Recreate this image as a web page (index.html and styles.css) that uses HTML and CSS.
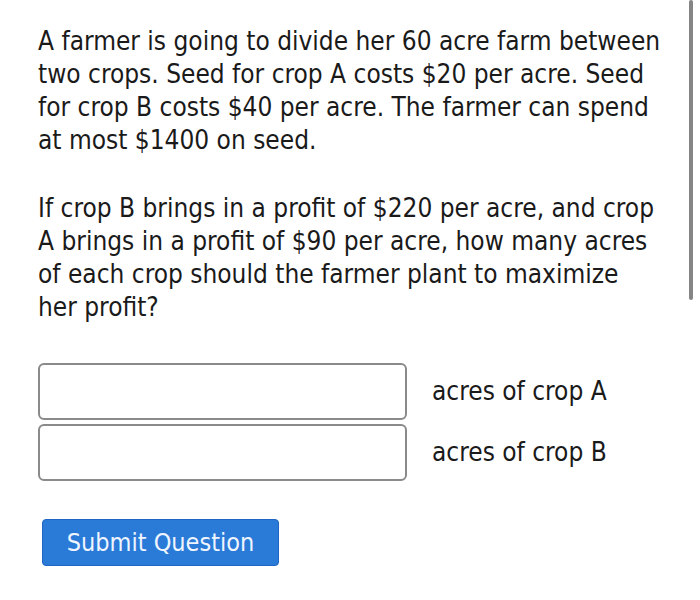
FILE: index.html
```html
<!DOCTYPE html>
<html>
<head>
<meta charset="utf-8">
<link rel="stylesheet" href="styles.css">
</head>
<body>
<div class="page">
  <main class="question">
    <p class="para">A farmer is going to divide her 60 acre farm between<br>two crops. Seed for crop A costs $20 per acre. Seed<br>for crop B costs $40 per acre. The farmer can spend<br>at most $1400 on seed.</p>
    <p class="para">If crop B brings in a profit of $220 per acre, and crop<br>A brings in a profit of $90 per acre, how many acres<br>of each crop should the farmer plant to maximize<br>her profit?</p>
    <div class="answers">
      <div class="answer-row">
        <input class="answer-input" type="text">
        <span class="answer-label">acres of crop A</span>
      </div>
      <div class="answer-row">
        <input class="answer-input" type="text">
        <span class="answer-label">acres of crop B</span>
      </div>
    </div>
    <button class="submit" type="button">Submit Question</button>
  </main>
  <div class="scrollbar"></div>
</div>
</body>
</html>
```

FILE: styles.css
```css
html, body {
  margin: 0;
  padding: 0;
  background: #ffffff;
}

.page {
  position: relative;
  width: 700px;
  height: 600px;
  overflow: hidden;
}

.question {
  padding: 25px 0 0 38px;
  width: 662px;
  font-family: "DejaVu Sans Condensed", "DejaVu Sans", sans-serif;
  font-size: 26px;
  line-height: 33px;
  color: #1a1a1a;
  white-space: nowrap;
}

.para {
  margin: 0 0 35px 0;
}

.answers {
  display: flex;
  flex-direction: column;
  gap: 4px;
  margin-top: 39px;
}

.answer-row {
  display: flex;
  align-items: center;
  gap: 25px;
}

.answer-input {
  box-sizing: border-box;
  width: 369px;
  height: 57px;
  margin: 0;
  border: 2px solid #8a8a8a;
  border-radius: 6px;
  background: #ffffff;
  outline: none;
}

.answer-label {
  font-size: 26px;
  color: #1a1a1a;
}

.submit {
  display: block;
  box-sizing: border-box;
  margin: 38px 0 0 4px;
  width: 237px;
  height: 47px;
  padding: 0;
  border: 1px solid #1e66c2;
  border-radius: 4px;
  background: #2a7ad8;
  color: #eef5ff;
  font-family: "DejaVu Sans Condensed", "DejaVu Sans", sans-serif;
  font-size: 25px;
}

.scrollbar {
  position: absolute;
  left: 689px;
  top: 0;
  width: 4px;
  height: 300px;
  border-radius: 2px;
  background: #858585;
}
```
